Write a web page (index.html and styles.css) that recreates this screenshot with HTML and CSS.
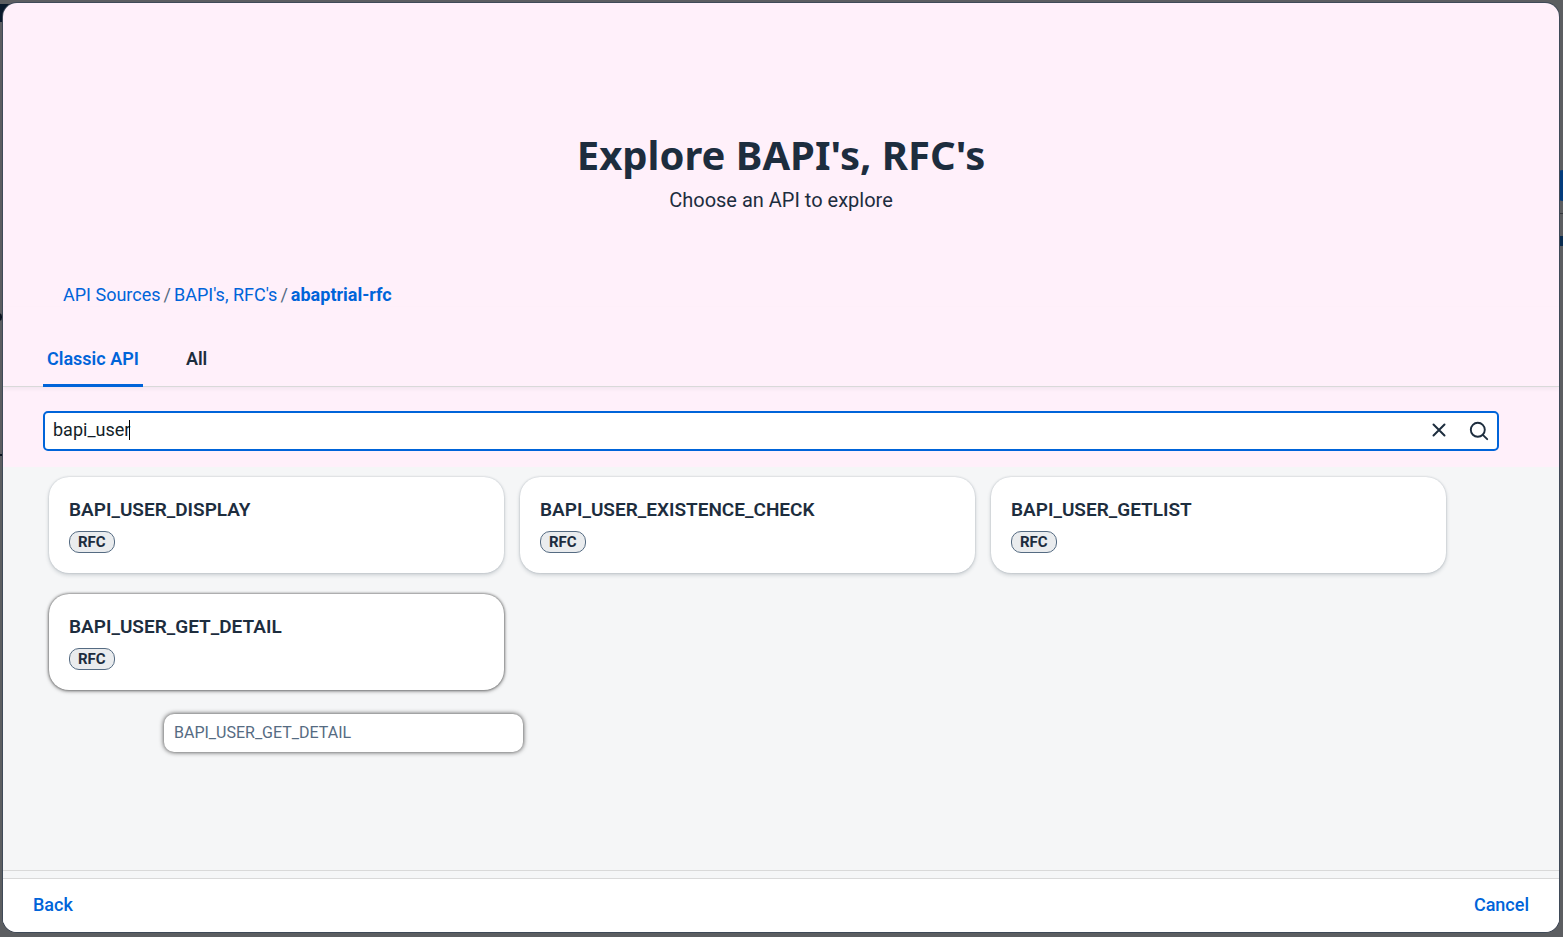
FILE: index.html
```html
<!DOCTYPE html>
<html lang="en">
<head>
<meta charset="utf-8">
<title>Explore BAPI's, RFC's</title>
<link rel="stylesheet" href="styles.css">
</head>
<body>
<div class="backdrop">
  <span class="behind behind-logo"></span>
  <span class="behind behind-button"></span>
  <span class="behind behind-line"></span>
  <span class="behind behind-link"></span>
  <span class="behind behind-text"></span>
  <span class="behind behind-dash"></span>
  <main class="dialog" role="dialog" aria-labelledby="title">
    <header class="hero">
      <h1 class="title" id="title">Explore BAPI's, RFC's</h1>
      <p class="subtitle">Choose an API to explore</p>
    </header>
    <nav class="breadcrumbs" aria-label="Breadcrumb">
      <a href="#">API Sources</a><span class="sep">/</span><a href="#">BAPI's, RFC's</a><span class="sep">/</span><a class="current" href="#">abaptrial-rfc</a>
    </nav>
    <div class="tabs" role="tablist">
      <button class="tab tab-active" role="tab" aria-selected="true">Classic API</button>
      <button class="tab" role="tab" aria-selected="false">All</button>
    </div>
    <div class="search-area">
      <div class="search">
        <div class="field">
          <input class="search-input" type="text" aria-label="Search APIs" value="bapi_user">
          <span class="caret"></span>
        </div>
        <button class="icon-button" aria-label="Clear">
          <svg width="16" height="16" viewBox="0 0 16 16" fill="none" stroke="currentColor" stroke-width="2" stroke-linecap="round"><path d="M2.5 1.5 13.5 12.5M13.5 1.5 2.5 12.5"/></svg>
        </button>
        <button class="icon-button" aria-label="Search">
          <svg width="20" height="20" viewBox="0 0 20 20" fill="none" stroke="currentColor" stroke-width="1.9" stroke-linecap="round"><circle cx="8.8" cy="8.8" r="7"/><path d="M13.8 13.8 18.2 18.2"/></svg>
        </button>
      </div>
    </div>
    <section class="results">
      <div class="cards">
        <article class="card"><h2 class="card-title">BAPI_USER_DISPLAY</h2><span class="tag">RFC</span></article>
        <article class="card"><h2 class="card-title">BAPI_USER_EXISTENCE_CHECK</h2><span class="tag">RFC</span></article>
        <article class="card"><h2 class="card-title">BAPI_USER_GETLIST</h2><span class="tag">RFC</span></article>
        <article class="card card-hover"><h2 class="card-title">BAPI_USER_GET_DETAIL</h2><span class="tag">RFC</span><div class="tooltip" role="tooltip">BAPI_USER_GET_DETAIL</div></article>
      </div>
    </section>
    <footer class="footer">
      <button class="text-button">Back</button>
      <button class="text-button">Cancel</button>
    </footer>
  </main>
</div>
</body>
</html>
```
FILE: styles.css
```css
* { box-sizing: border-box; }
body {
  margin: 0;
  font-family: Roboto, "Noto Sans", sans-serif;
  font-size: 18px;
  line-height: 24px;
  color: #1d2d3e;
}
h1, h2, p { margin: 0; }
button { font: inherit; border: 0; background: none; padding: 0; color: inherit; }
a { color: #0064d9; text-decoration: none; }

.backdrop {
  position: relative;
  display: flex;
  min-height: 100vh;
  padding: 3px 4px 5px 3px;
  background: #5c5e61;
  overflow: hidden;
}
.behind { position: absolute; }
.behind-logo { left: 0; top: 4px; width: 10px; height: 18px; background: #0a1a2c; }
.behind-button { right: -8px; top: 170px; width: 16px; height: 31px; border-radius: 8px; background: #043c7c; }
.behind-line { right: 0; top: 213px; width: 8px; height: 1px; background: #34383c; }
.behind-link { right: 0; top: 236px; width: 5px; height: 10px; background: #0a2c50; }
.behind-text { left: -5px; top: 313px; width: 7px; height: 8px; border-radius: 4px; background: #0c1420; }
.behind-dash { left: 0; top: 454px; width: 2px; height: 2px; background: #0c1420; }

.dialog {
  position: relative;
  flex: 1;
  display: flex;
  flex-direction: column;
  border-radius: 14px;
  background: #fff0fa;
  box-shadow: 0 0 0 1px #3f4a58;
  overflow: hidden;
}
.hero { padding: 126px 40px 67px; text-align: center; }
.title { margin-bottom: 3px; font-family: "Noto Sans", sans-serif; font-size: 40px; line-height: 52px; font-weight: 700; }
.subtitle { font-size: 20px; line-height: 32px; }

.breadcrumbs { display: flex; gap: 3px; padding: 0 60px; }
.sep { color: #556b82; }
.current { font-weight: 700; }

.tabs {
  display: flex;
  gap: 39px;
  padding: 20px 40px 0;
  border-bottom: 1px solid #d9d9d9;
  box-shadow: 0 2px 4px rgba(34, 53, 72, 0.06);
}
.tab { margin-bottom: -1px; padding: 20px 4px 13px; border-bottom: 3px solid transparent; font-weight: 600; }
.tab-active { color: #0064d9; border-bottom-color: #0064d9; }

.search-area { padding: 24px 60px 16px 40px; }
.search {
  display: flex;
  align-items: center;
  height: 40px;
  border: 2px solid #0064d9;
  border-radius: 5px;
  background: #fff;
}
.field { position: relative; flex: 1; }
.search-input {
  display: block;
  width: 100%;
  height: 36px;
  padding: 0 8px 4px;
  border: 0;
  outline: 0;
  background: none;
  font: inherit;
  color: #131e29;
}
.caret { position: absolute; left: 84px; top: 7px; width: 1px; height: 20px; background: #000; }
.icon-button { display: flex; align-items: center; justify-content: center; width: 40px; height: 36px; }
.icon-button:last-child { margin-right: -2px; }

.results {
  flex: 1;
  margin-bottom: 7px;
  padding: 10px 113px 20px 46px;
  background: #f5f6f7;
  border-bottom: 1px solid #d9d9d9;
}
.cards { display: grid; grid-template-columns: repeat(3, 1fr); gap: 21px 16px; }
.card {
  position: relative;
  padding: 21px 20px 20px;
  border-radius: 20px;
  background: #fff;
  box-shadow: 0 0 2px rgba(34, 53, 72, 0.25), 0 2px 4px rgba(34, 53, 72, 0.2);
}
.card-hover { box-shadow: 0 0 3px rgba(0, 0, 0, 0.6), 0 1px 4px rgba(0, 0, 0, 0.4); }
.card-title { margin-bottom: 9px; font-size: 19px; line-height: 24px; font-weight: 600; }
.tag {
  display: block;
  width: fit-content;
  padding: 0 8px;
  border: 1px solid #556b82;
  border-radius: 10px;
  background: #eaecee;
  font-size: 15px;
  line-height: 20px;
  font-weight: 700;
}
.tooltip {
  position: absolute;
  left: 115px;
  top: 120px;
  width: 359px;
  padding: 7px 10px;
  border-radius: 10px;
  background: #fff;
  box-shadow: 0 0 5px rgba(0, 0, 0, 0.8);
  font-size: 16px;
  color: #556b82;
}
.footer {
  display: flex;
  justify-content: space-between;
  align-items: center;
  padding: 14px 30px 15px;
  border-top: 1px solid #d9d9d9;
  background: #fff;
  box-shadow: 0 -7px 0 #f5f6f7;
}
.text-button { color: #0064d9; font-weight: 500; }
```
